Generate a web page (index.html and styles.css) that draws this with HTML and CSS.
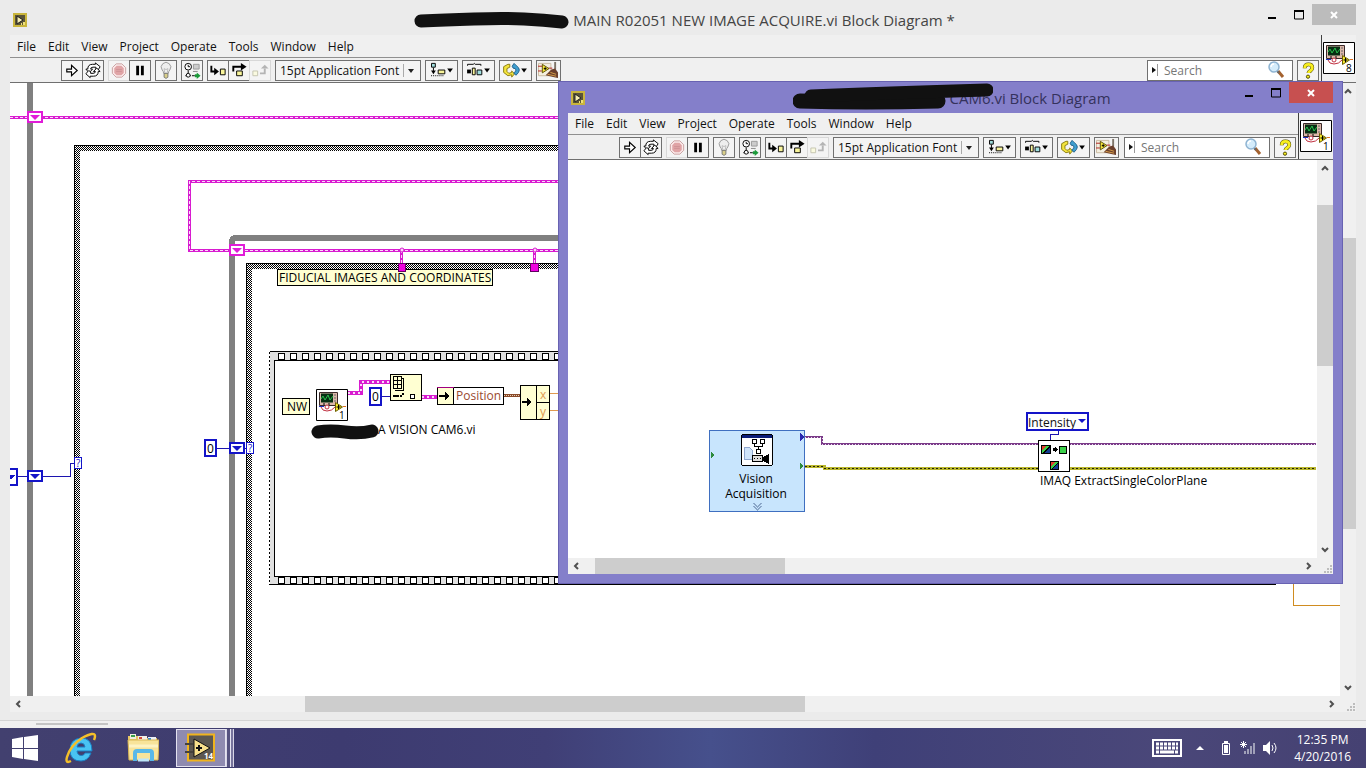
FILE: index.html
```html
<!DOCTYPE html>
<html lang="en">
<head>
    <meta charset="UTF-8">
    <title>Block Diagram</title>
    <link rel="stylesheet" href="styles.css">
</head>
<body>
    <!-- shared icons -->
    <svg class="defs" aria-hidden="true">
        <defs>
            <pattern id="checker" width="2" height="2" patternUnits="userSpaceOnUse">
                <rect width="2" height="2" fill="#fff"/>
                <rect width="1" height="1"/>
                <rect x="1" y="1" width="1" height="1"/>
            </pattern>
            <pattern id="sprocket" x="276" y="0" width="12" height="9" patternUnits="userSpaceOnUse">
                <rect width="12" height="9" fill="#e0e0e0"/>
                <rect x="2" y="1" width="7" height="7"/>
                <rect x="3" y="2" width="5" height="5" fill="#fff"/>
            </pattern>
            <symbol id="i-app" viewBox="0 0 14 14">
                <rect x="1" y="1" width="12" height="12" fill="#5a5438" stroke="#c9b53c" stroke-width="2"/>
                <path d="M4 3v8l6-4z" fill="#f7efb0" stroke="#222"/>
                <path d="M8 10h1v2H8zM10 9h2v3h-2z" fill="#f0e27a"/>
            </symbol>
            <symbol id="i-run" viewBox="0 0 20 20">
                <path d="M4.500 8.500h5v-4l6 5.500-6 5.500v-4h-5z" fill="#fff" stroke="#000" stroke-width="1.200"/>
            </symbol>
            <symbol id="i-cont" viewBox="0 0 20 20">
                <path d="M4.500 8.500q0-5 5-5h3V2l5 4-2.500 4-2-1.500V6.500h-3q-2.500 0-2.500 2h2L6 12.500 2.500 8.500z" fill="#fff" stroke="#000"/>
                <path d="M15.500 11q0 5-5 5H7v1.500l-4.500-4L5.500 10l2 1.500v1.500h2.500q2.500 0 2.500-2h-2L14 7.500l3.500 3.500z" fill="#fff" stroke="#000"/>
            </symbol>
            <symbol id="i-abort" viewBox="0 0 20 20">
                <path d="M7 3h6l4 4v6l-4 4H7l-4-4V7z" fill="#fbeaea" stroke="#c9a0a0"/>
                <path d="M7.500 5h5L15 7.500v5L12.500 15h-5L5 12.500v-5z" fill="#e0a4a6"/>
                <path d="M7 9h6M7 11h6" stroke="#cf9296"/>
            </symbol>
            <symbol id="i-pause" viewBox="0 0 20 20">
                <path d="M6 5h3v10H6zM11 5h3v10h-3z"/>
            </symbol>
            <symbol id="i-bulb" viewBox="0 0 20 20">
                <path d="M7.500 13q0-2-1.500-3.500a5 5 0 1 1 8 0Q12.500 11 12.500 13z" fill="#eee" stroke="#999"/>
                <path d="M8.500 12L8 8l2 1 2-1-.5 4" fill="none" stroke="#bbb"/>
                <path d="M8 13h4v4l-1 1H9l-1-1z" fill="#d9cf88" stroke="#777"/>
            </symbol>
            <symbol id="i-retain" viewBox="0 0 20 20">
                <circle cx="6" cy="6" r="3.500" fill="#fff" stroke="#000"/>
                <path d="M6 4v2h2M6 10v5M3 15.500h6M10 15.500h3" fill="none" stroke="#000"/>
                <circle cx="6" cy="15" r="2" fill="#fff" stroke="#000"/>
                <path d="M11.500 3.500h6v5h-6z" fill="#ccc" stroke="#999"/>
                <path d="M11 11h5" stroke="#888"/>
                <path d="M13 14h2v-2l4 3.500-4 3.500v-2h-2z" fill="#1c9a3a"/>
            </symbol>
            <symbol id="i-into" viewBox="0 0 20 20">
                <path d="M3 5v6h4" fill="none" stroke="#000" stroke-width="2"/>
                <path d="M6 7l5 4-5 4z"/>
                <path d="M12.500 8.500h5v6h-5z" fill="#f8f49a" stroke="#000"/>
            </symbol>
            <symbol id="i-over" viewBox="0 0 20 20">
                <path d="M4 11V6h9" fill="none" stroke="#000" stroke-width="2"/>
                <path d="M12 2l6 4-6 4z"/>
                <path d="M7.500 10.500h6v5h-6z" fill="#f8f49a" stroke="#000"/>
            </symbol>
            <symbol id="i-out" viewBox="0 0 20 20">
                <path d="M2.500 10.500h5v5h-5z" fill="#fafae0" stroke="#c5c5b0"/>
                <path d="M10 13h5V8" fill="none" stroke="#b4b4b4" stroke-width="2"/>
                <path d="M11 8l4-4 4 4z" fill="#b4b4b4"/>
            </symbol>
            <symbol id="i-align" viewBox="0 0 32 20">
                <path d="M5.500 2.500h4v4h-4z" fill="#9fdede" stroke="#000"/>
                <path d="M7.500 7v4" stroke="#000"/>
                <path d="M5 15.500h14" stroke="#000" stroke-dasharray="1 1"/>
                <path d="M5 10h5l-2.500 4z"/>
                <path d="M12.500 9.500h7v4h-7z" fill="#f8f49a" stroke="#000"/>
                <path d="M22 8h6l-3 4z"/>
            </symbol>
            <symbol id="i-dist" viewBox="0 0 32 20">
                <path d="M4.500 5V3.500h6l1-1 1 1h6V5" fill="none" stroke="#000"/>
                <path d="M4 9h4v4H4z"/>
                <path d="M9.500 7.500h3v7h-3z" fill="#f8f49a" stroke="#000"/>
                <path d="M14.500 9.500h5v5h-5z" fill="#9fdede" stroke="#000"/>
                <path d="M22 8h6l-3 4z"/>
            </symbol>
            <symbol id="i-reorder" viewBox="0 0 32 20">
                <path d="M8 3.500L3.500 6v6L8 15.500l4-1V17l3-3.500-3-3v1.500l-3 1-2-2V8l3-1.500v-3z" fill="#f3e43c" stroke="#8a7b10"/>
                <path d="M12.500 5.500L14.500 2.500 17 5q3 2 3 4.500T16.500 15L14 12.500q2.500-1 2.500-3T13.500 7.500z" fill="#3f9fd0" stroke="#1d5f8a"/>
                <path d="M22 8h6l-3 4z"/>
            </symbol>
            <symbol id="i-clean" viewBox="0 0 24 20">
                <path d="M1.500 2.500h13v13h-13z" fill="#f4efe0" stroke="#c9b9a0"/>
                <path d="M1 5.500h5M1 10.500h4M12 7.500h4" stroke="#b02020"/>
                <path d="M5.500 3.500v9l7-4.500z" fill="#f6e53a" stroke="#5b5208"/>
                <path d="M7 8h3M8.500 6.500v3" stroke="#000"/>
                <path d="M18 1h2v8h-2z" fill="#7d7468"/>
                <path d="M15 9l4-1 3 4v6l-4-1-9-2z" fill="#6b3f2c"/>
                <path d="M11 14l9 2M14 12l6 2" stroke="#d8a04a"/>
            </symbol>
            <symbol id="i-lens" viewBox="0 0 18 18">
                <path d="M11 10l5 6" stroke="#a4622f" stroke-width="3"/>
                <path d="M10 10l2 2" stroke="#666" stroke-width="2"/>
                <circle cx="7" cy="6" r="5" fill="#d4ecfb" stroke="#8fb4d2" stroke-width="1.500"/>
                <path d="M4 6q0-3 3-3" fill="none" stroke="#fff" stroke-width="1.500"/>
            </symbol>
            <symbol id="i-help" viewBox="0 0 20 20">
                <path d="M6.500 7.500q0-4 4-4t4 3.500q0 2-2 3.300t-2 2.200" fill="none" stroke="#4a4300" stroke-width="4"/>
                <path d="M6.500 7.500q0-4 4-4t4 3.500q0 2-2 3.300t-2 2.200" fill="none" stroke="#f7ee1e" stroke-width="3"/>
                <circle cx="10" cy="16.500" r="1.700" fill="#f7ee1e" stroke="#4a4300"/>
            </symbol>
            <symbol id="i-vi" viewBox="0 0 32 32">
                <path d="M.5.5h31v31H.5z" fill="#fff" stroke="#000"/>
                <path d="M3.500 3.500h18v13h-18z" fill="#dcb8aa" stroke="#3a2a2a"/>
                <path d="M5 4.500h12v9H5z" fill="#062e12"/>
                <path d="M5 10l2-3 2 4 3-5 2 5 3-4" fill="none" stroke="#28c04c"/>
                <path d="M18 6h2M18 9h2M18 12h2" stroke="#666"/>
                <path d="M7 15h2M12 15h2" stroke="#000"/>
                <path d="M5 18q1 4 6 4t8-4" fill="none" stroke="#c03040"/>
                <circle cx="11" cy="18" r="2" fill="#fff" stroke="#c03040"/>
                <path d="M3 17.500h5" stroke="#2030c0"/>
                <path d="M19.500 13.500v9l7-4.500z" fill="#f7ea2c" stroke="#6b5e00"/>
                <path d="M20.500 18h4M22.500 16v4" stroke="#000"/>
                <path d="M27 17.500h3" stroke="#e07020"/>
            </symbol>
            <symbol id="i-shift" viewBox="0 0 16 12">
                <path d="M1 1h14v10H1z" fill="#fff" stroke="currentColor" stroke-width="2"/>
                <path d="M3 4h10l-5 5z" fill="currentColor"/>
            </symbol>
            <symbol id="i-chev" viewBox="0 0 10 10">
                <path d="M2 7l3-3 3 3" fill="none" stroke="#505050" stroke-width="2"/>
            </symbol>
            <symbol id="i-grip" viewBox="0 0 10 10">
                <path d="M7 1h2v2H7zM4 4h2v2H4zM7 4h2v2H7zM1 7h2v2H1zM4 7h2v2H4zM7 7h2v2H7z" fill="#bdbdbd"/>
            </symbol>
        </defs>
    </svg>

    <main class="desktop">
        <section class="window main">
            <header class="title-bar">
                <div class="title-side"><svg class="app-icon"><use href="#i-app"/></svg></div>
                <h1 class="title">
                    <svg class="redact" viewBox="0 0 156 18"><path class="marker" d="M7 10Q30 9 60 8T110 8 148 11" stroke-width="13"/></svg>
                    MAIN R02051 NEW IMAGE ACQUIRE.vi Block Diagram *
                </h1>
                <div class="win-btns">
                    <button class="win-btn" aria-label="Minimize"><svg viewBox="0 0 12 12"><path d="M2 8h8v2H2z"/></svg></button>
                    <button class="win-btn" aria-label="Maximize"><svg viewBox="0 0 12 12"><path d="M1.500 2v8h9V2z" fill="none" stroke="#000"/><path d="M1 1h10v2H1z"/></svg></button>
                    <button class="win-btn close" aria-label="Close"><svg viewBox="0 0 12 12"><path d="M3 3l6 6M9 3l-6 6" stroke="#fff" stroke-width="2"/></svg></button>
                </div>
            </header>
            <div class="bars">
                <div class="bars-left">
                    <nav class="menu">
                        <button>File</button><button>Edit</button><button>View</button><button>Project</button><button>Operate</button><button>Tools</button><button>Window</button><button>Help</button>
                    </nav>
                    <div class="toolbar">
                        <div class="group">
                            <button class="tool" aria-label="Run"><svg><use href="#i-run"/></svg></button>
                            <button class="tool" aria-label="Run Continuously"><svg><use href="#i-cont"/></svg></button>
                        </div>
                        <div class="group">
                            <button class="tool off" aria-label="Abort"><svg><use href="#i-abort"/></svg></button>
                            <button class="tool" aria-label="Pause"><svg><use href="#i-pause"/></svg></button>
                        </div>
                        <button class="tool" aria-label="Highlight Execution"><svg><use href="#i-bulb"/></svg></button>
                        <button class="tool" aria-label="Retain Wire Values"><svg><use href="#i-retain"/></svg></button>
                        <div class="group">
                            <button class="tool" aria-label="Step Into"><svg><use href="#i-into"/></svg></button>
                            <button class="tool" aria-label="Step Over"><svg><use href="#i-over"/></svg></button>
                            <button class="tool off" aria-label="Step Out"><svg><use href="#i-out"/></svg></button>
                        </div>
                        <div class="font-box">
                            <select aria-label="Text Settings"><option>15pt Application Font</option></select>
                        </div>
                        <button class="tool wide" aria-label="Align Objects"><svg><use href="#i-align"/></svg></button>
                        <button class="tool wide" aria-label="Distribute Objects"><svg><use href="#i-dist"/></svg></button>
                        <button class="tool wide" aria-label="Reorder"><svg><use href="#i-reorder"/></svg></button>
                        <button class="tool clean" aria-label="Clean Up Diagram"><svg><use href="#i-clean"/></svg></button>
                        <label class="search">
                            <span class="search-mark"></span>
                            <input type="text" placeholder="Search" aria-label="Search">
                            <svg><use href="#i-lens"/></svg>
                        </label>
                        <button class="tool help" aria-label="Context Help"><svg><use href="#i-help"/></svg></button>
                    </div>
                </div>
                <svg class="vi-icon" viewBox="0 0 32 32"><use href="#i-vi"/><text x="23" y="30" class="vi-num">8</text></svg>
            </div>
            <div class="view">
                <div class="canvas">
                    <svg class="diagram">
                        <!-- scroll offset of the diagram -->
                        <g transform="translate(-10 -83)">
                            <!-- loops -->
                            <path d="M30 83V900M232 900V242q0-4 4-4H1275" fill="none" stroke="#808080" stroke-width="6"/>

                            <!-- case structures -->
                            <path d="M77 900V148H1275M249 900V266H1275" fill="none" stroke="url(#checker)" stroke-width="6"/>
                            <path d="M74.500 900V145.500H1275M246.500 900V263.500H1275" fill="none" stroke="#000"/>

                            <!-- flat sequence -->
                            <rect x="270" y="352" width="1006" height="233" fill="#e0e0e0"/>
                            <g transform="translate(0 352)"><rect x="276" width="1000" height="9" fill="url(#sprocket)"/></g>
                            <g transform="translate(0 576)"><rect x="276" width="1000" height="9" fill="url(#sprocket)"/></g>
                            <rect x="274.500" y="360.500" width="1000" height="216" fill="#fff" stroke="#000"/>
                            <path d="M1276 351.500H269.500M269 584.500H1276" fill="none" stroke="#000"/>
                            <path d="M269.500 352V585" stroke="#000" stroke-dasharray="2 2"/>

                            <!-- cluster wires -->
                            <g class="wire-pink">
                                <path d="M10 117.500H1275M1275 181.500H189.500V250.500H1275M401.500 250V266M534.500 250V266"/>
                                <path class="dash" d="M10 117.500H1275M1275 181.500H189.500V250.500H1275M401.500 250V266M534.500 250V266"/>
                            </g>
                            <circle class="joint" cx="402" cy="250" r="2"/>
                            <circle class="joint" cx="535" cy="250" r="2"/>
                            <path d="M398.500 263.500h7v8h-7zM530.500 263.500h8v8h-8z" fill="#f000e0" stroke="#600060"/>
                            <use class="pink" href="#i-shift" x="27" y="111" width="16" height="12"/>
                            <use class="pink" href="#i-shift" x="229" y="244" width="16" height="12"/>

                            <!-- integer wires -->
                            <path d="M18 476.500H70.500V463.500H75M217 448.500H246M382 396.500H390" fill="none" stroke="#1c14b0"/>
                            <use class="blue" href="#i-shift" x="27" y="470" width="16" height="12"/>
                            <use class="blue" href="#i-shift" x="229" y="442" width="16" height="12"/>
                            <path d="M10 469h7v16h-7" fill="#fff" stroke="#1414c8" stroke-width="2"/>
                            <path d="M10 475h5l-3 4h-2z" fill="#1414c8"/>
                            <path d="M205 440h11v16h-11zM370 388h11v17h-11z" fill="#fff" stroke="#1414c8" stroke-width="2"/>
                            <text x="207" y="453">0</text>
                            <text x="372" y="401">0</text>
                            <path d="M74.500 457.500h7v11h-7zM246.500 442.500h7v11h-7z" fill="#fff" stroke="#1414c8"/>
                            <text class="small blue" x="76" y="467">?</text>
                            <text class="small blue" x="248" y="452">?</text>

                            <!-- comments -->
                            <rect class="box" x="277.500" y="269.500" width="215" height="16"/>
                            <text x="279" y="282">FIDUCIAL IMAGES AND COORDINATES</text>
                            <rect class="box" x="282.500" y="398.500" width="27" height="16"/>
                            <text x="287" y="411">NW</text>
                            <path d="M398.500 263.500h7v8h-7z" fill="#f000e0" stroke="#600060"/>

                            <!-- sub VI -->
                            <use href="#i-vi" x="316" y="389" width="32" height="32"/>
                            <text class="vi-num" x="339" y="419">1</text>
                            <text x="378" y="434">A VISION CAM6.vi</text>
                            <path class="marker" d="M318 432Q330 430 345 432T372 431" stroke-width="13"/>

                            <!-- index array -->
                            <path d="M348 393H361V382H390M422 397H437" fill="none" stroke="#d81cd0" stroke-width="4"/>
                            <path d="M348 393H361V382H390M422 397H437" fill="none" stroke="#fbd8fa" stroke-width="2" stroke-dasharray="2 3"/>
                            <rect class="box" x="390.500" y="374.500" width="31" height="26"/>
                            <path d="M393.500 376.500h8v12h-8zM393 380.500h9M393 384.500h9M397.500 376v12M402 378.500h1.500V390.500H395" fill="none" stroke="#000"/>
                            <path d="M393 395h6v2h-6zM400 395h2v2h-2zM402 393h2v2h-2z"/>
                            <path d="M410.500 394.500h4v4h-4z" fill="#fff" stroke="#000"/>

                            <!-- unbundle -->
                            <rect class="box" x="437.500" y="387.500" width="66" height="17"/>
                            <rect x="453.500" y="387.500" width="50" height="17" fill="#fff" stroke="#000"/>
                            <path d="M437 387.500H454" stroke="#a00080"/>
                            <path d="M439 395h6v-3l4 4-4 4v-3h-6z"/>
                            <text class="brown" x="456" y="400">Position</text>
                            <path d="M504 395.500H520" stroke="#8a4a2a" stroke-width="3"/>
                            <path d="M504 395.500H520" stroke="#e6d0b8" stroke-dasharray="1 1"/>
                            <rect class="box" x="520.500" y="385.500" width="29" height="34"/>
                            <path d="M536.500 385v34M536 402.500h13" stroke="#000" fill="none"/>
                            <path d="M522 401h5v-3l4 4-4 4v-3h-5z"/>
                            <text class="orange" x="540" y="399">x</text>
                            <text class="orange" x="540" y="416">y</text>
                            <path d="M550 393.500H600M550 410.500H600" stroke="#e09a50"/>

                            <path d="M1293.500 540V605.500H1340" fill="none" stroke="#d08c20"/>
                        </g>
                    </svg>
                </div>
                <div class="scroll-v">
                    <button aria-label="Scroll up"><svg><use href="#i-chev"/></svg></button>
                    <div class="track"><div class="thumb"></div></div>
                    <button aria-label="Scroll down"><svg class="down"><use href="#i-chev"/></svg></button>
                </div>
                <div class="scroll-h">
                    <button aria-label="Scroll left"><svg class="left"><use href="#i-chev"/></svg></button>
                    <div class="track"><div class="thumb"></div></div>
                    <button aria-label="Scroll right"><svg class="right"><use href="#i-chev"/></svg></button>
                </div>
                <div class="grip"><svg><use href="#i-grip"/></svg></div>
            </div>
        </section>

        <section class="window child">
            <header class="title-bar">
                <div class="title-side"><svg class="app-icon"><use href="#i-app"/></svg></div>
                <h2 class="title">
                    CAM6.vi Block Diagram
                    <svg class="redact over" viewBox="0 0 200 28"><path class="marker" d="M7 18Q70 20 145 18" stroke-width="15"/><path class="marker" d="M18 13Q90 10 194 7" stroke-width="13"/></svg>
                </h2>
                <div class="win-btns">
                    <button class="win-btn" aria-label="Minimize"><svg viewBox="0 0 12 12"><path d="M2 8h8v2H2z"/></svg></button>
                    <button class="win-btn" aria-label="Maximize"><svg viewBox="0 0 12 12"><path d="M1.500 2v8h9V2z" fill="none" stroke="#000"/><path d="M1 1h10v2H1z"/></svg></button>
                    <button class="win-btn close" aria-label="Close"><svg viewBox="0 0 12 12"><path d="M3 3l6 6M9 3l-6 6" stroke="#fff" stroke-width="2"/></svg></button>
                </div>
            </header>
            <div class="bars">
                <div class="bars-left">
                    <nav class="menu">
                        <button>File</button><button>Edit</button><button>View</button><button>Project</button><button>Operate</button><button>Tools</button><button>Window</button><button>Help</button>
                    </nav>
                    <div class="toolbar">
                        <div class="group">
                            <button class="tool" aria-label="Run"><svg><use href="#i-run"/></svg></button>
                            <button class="tool" aria-label="Run Continuously"><svg><use href="#i-cont"/></svg></button>
                        </div>
                        <div class="group">
                            <button class="tool off" aria-label="Abort"><svg><use href="#i-abort"/></svg></button>
                            <button class="tool" aria-label="Pause"><svg><use href="#i-pause"/></svg></button>
                        </div>
                        <button class="tool" aria-label="Highlight Execution"><svg><use href="#i-bulb"/></svg></button>
                        <button class="tool" aria-label="Retain Wire Values"><svg><use href="#i-retain"/></svg></button>
                        <div class="group">
                            <button class="tool" aria-label="Step Into"><svg><use href="#i-into"/></svg></button>
                            <button class="tool" aria-label="Step Over"><svg><use href="#i-over"/></svg></button>
                            <button class="tool off" aria-label="Step Out"><svg><use href="#i-out"/></svg></button>
                        </div>
                        <div class="font-box">
                            <select aria-label="Text Settings"><option>15pt Application Font</option></select>
                        </div>
                        <button class="tool wide" aria-label="Align Objects"><svg><use href="#i-align"/></svg></button>
                        <button class="tool wide" aria-label="Distribute Objects"><svg><use href="#i-dist"/></svg></button>
                        <button class="tool wide" aria-label="Reorder"><svg><use href="#i-reorder"/></svg></button>
                        <button class="tool clean" aria-label="Clean Up Diagram"><svg><use href="#i-clean"/></svg></button>
                        <label class="search">
                            <span class="search-mark"></span>
                            <input type="text" placeholder="Search" aria-label="Search">
                            <svg><use href="#i-lens"/></svg>
                        </label>
                        <button class="tool help" aria-label="Context Help"><svg><use href="#i-help"/></svg></button>
                    </div>
                </div>
                <svg class="vi-icon" viewBox="0 0 32 32"><use href="#i-vi"/><text x="23" y="30" class="vi-num">1</text></svg>
            </div>
            <div class="view">
                <div class="canvas">
                    <svg class="diagram">
                        <g transform="translate(-568 -160)">
                            <!-- session and image wires -->
                            <path d="M805 437H822V444H1316" fill="none" stroke="#7a3a88" stroke-width="2"/>
                            <path d="M805 437.500H822.500V444.500H1316" fill="none" stroke="#eadcf0" stroke-dasharray="1 2"/>
                            <path d="M805 466.500H824V468H1316" fill="none" stroke="#b9b62c" stroke-width="3"/>
                            <path d="M805 466.500H824V468H1316" fill="none" stroke="#23230a" stroke-dasharray="2 2"/>

                            <!-- express VI -->
                            <rect x="709.500" y="430.500" width="95" height="81" fill="#c8e5fd" stroke="#3f6fc0"/>
                            <path d="M711 452l4 3-4 3zM800 463l4 3-4 3z" fill="#2d8a3c"/>
                            <path d="M800 433l4 4-4 4z" fill="#2a2ab0"/>
                            <rect x="741.500" y="434.500" width="31" height="31" rx="2" fill="#fff" stroke="#000"/>
                            <path d="M742 435h30v3h-30z" fill="#0a1c78"/>
                            <path d="M752.500 439.500h4v4h-4zM760.500 439.500h4v4h-4zM756.500 449.500h4v4h-4zM754.500 444v2.500H762.500V444M758.500 446.500V449" fill="#fff" stroke="#000"/>
                            <path d="M744.500 447.500h5l3 3v9h-8z" fill="#cfe4fa" stroke="#90a8d0"/>
                            <path d="M752.500 455.500h10v6h-10z" fill="#ddd" stroke="#000" stroke-width="1.500"/>
                            <path d="M762 458l3-2 4-2v10l-4-2-3-2z"/>
                            <path d="M754 458h1M757 458h1M760 458h1" stroke="#000"/>
                            <text x="756" y="483" text-anchor="middle">Vision</text>
                            <text x="756" y="498" text-anchor="middle">Acquisition</text>
                            <path d="M753.500 503l4 4 4-4M753.500 506l4 4 4-4" fill="none" stroke="#8aa6c8"/>

                            <!-- IMAQ ExtractSingleColorPlane -->
                            <path d="M1058.500 430V434.500H1050.500V441" fill="none" stroke="#1c14b0"/>
                            <rect x="1038.500" y="440.500" width="31" height="31" fill="#fff" stroke="#000"/>
                            <path d="M1041 445h10v9h-10zM1050 461h9v9h-9z"/>
                            <path d="M1042 446h4l-4 4zM1051 462h4l-4 4z" fill="#e04030"/>
                            <path d="M1042 453l7-7h-3l-4 4zM1051 469l7-7h-3l-4 4z" fill="#3cd04a"/>
                            <path d="M1044 453l6-6v6zM1053 469l5-6v6z" fill="#103c90"/>
                            <path d="M1053 448h2v-2l3 3.500-3 3.500v-2h-2z"/>
                            <path d="M1059.500 446.500h7v7h-7z" fill="#3cd04a" stroke="#000"/>
                            <text x="1040" y="485">IMAQ ExtractSingleColorPlane</text>
                        </g>
                    </svg>
                    <div class="ring"><select aria-label="Color Plane"><option>Intensity</option></select></div>
                </div>
                <div class="scroll-v">
                    <button aria-label="Scroll up"><svg><use href="#i-chev"/></svg></button>
                    <div class="track"><div class="thumb"></div></div>
                    <button aria-label="Scroll down"><svg class="down"><use href="#i-chev"/></svg></button>
                </div>
                <div class="scroll-h">
                    <button aria-label="Scroll left"><svg class="left"><use href="#i-chev"/></svg></button>
                    <div class="track"><div class="thumb"></div></div>
                    <button aria-label="Scroll right"><svg class="right"><use href="#i-chev"/></svg></button>
                </div>
                <div class="grip"><svg><use href="#i-grip"/></svg></div>
            </div>
        </section>
    </main>

    <footer class="taskbar">
        <button class="task start" aria-label="Start"><svg viewBox="0 0 26 26"><path d="M0 4l11-2v11H0zM12 2l14-2v13H12zM0 14h11v10L0 22zM12 14h14v12l-14-2z" fill="#fff"/></svg></button>
        <button class="task" aria-label="Internet Explorer"><svg viewBox="0 0 32 32">
            <path d="M26 21q-3 8-10 8Q5 29 5 18T16 6q11 0 11 13H12q.5 4.500 4.500 4.500 2.500 0 3.500-2.500zM12 15h8q-.5-4-4-4t-4 4z" fill="#49c3f3" stroke="#1b7fc4"/>
            <path d="M6 29Q0 32 2 25 5 14 17 6 30-1 30 4q0 2-1 4" fill="none" stroke="#f4bf2a" stroke-width="2.500"/>
        </svg></button>
        <button class="task" aria-label="File Explorer"><svg viewBox="0 0 32 32">
            <path d="M1 4h10l2 2h17v6H1z" fill="#e8c763"/>
            <path d="M3 2h6v5H3z" fill="#f2efe0"/><path d="M4 3h4v2H4z" fill="#3aa04a"/>
            <path d="M11 4h9v5h-9z" fill="#f4f1e6"/><path d="M12 5h3v2h-3z" fill="#d24a3a"/>
            <path d="M21 5h8v4h-8z" fill="#eef3f8"/><path d="M21 6h3v2h-3z" fill="#3a8fd0"/>
            <path d="M1 8h31l-1 20H2z" fill="#f8e49a" stroke="#d9b755"/>
            <path d="M2 14h29" stroke="#fdf3c4" stroke-width="3"/>
            <path d="M8 29V21q0-2 2-2h13q2 0 2 2v8" fill="none" stroke="#58b8e8" stroke-width="4"/>
            <path d="M11 28h11" stroke="#bfe6f8" stroke-width="3"/>
        </svg></button>
        <button class="task active" aria-label="LabVIEW"><svg viewBox="0 0 32 32">
            <path d="M3 2.500h26v26H3z" fill="#5c5750" stroke="#f0b41e" stroke-width="2"/>
            <path d="M0 12h8M0 20h8" stroke="#44413c" stroke-width="2"/>
            <path d="M9 7v18l16-9z" fill="#f8e08c" stroke="#111"/>
            <path d="M11 16h6M14 13v6" stroke="#111" stroke-width="2"/>
            <text x="19" y="27" class="task-num">14</text>
        </svg></button>
        <div class="stack"></div>
        <div class="tray">
            <button aria-label="Touch keyboard"><svg class="keyboard" viewBox="0 0 30 18"><path d="M1 1h28v16H1z" fill="none" stroke="#fff" stroke-width="2"/><path d="M4 5h22M4 9h22" stroke="#fff" stroke-width="3" stroke-dasharray="3 1"/><path d="M4 13h3M8 13h14M23 13h3" stroke="#fff" stroke-width="3"/></svg></button>
            <button class="more" aria-label="Show hidden icons"><svg viewBox="0 0 8 8"><path d="M0 6l4-4 4 4z" fill="#fff"/></svg></button>
            <button aria-label="Battery"><svg viewBox="0 0 16 16"><path d="M6 1h4v2H6z" fill="#fff"/><path d="M4.500 3.500h7v11h-7z" fill="none" stroke="#fff"/><path d="M6 5h4v8H6z" fill="#fff"/></svg></button>
            <button aria-label="Network"><svg viewBox="0 0 16 16"><path d="M5 14v-3M8 14V9M11 14V6M14 14V3" stroke="#a0a0b8" stroke-width="2"/><path d="M3.500 1v7M0 4.500h7M1 2l5 5M6 2L1 7" stroke="#fff"/></svg></button>
            <button aria-label="Volume"><svg viewBox="0 0 16 16"><path d="M1 5h3l4-4v14l-4-4H1z" fill="#fff"/><path d="M10 5q2 3 0 6M12 3q4 5 0 10" fill="none" stroke="#fff"/></svg></button>
            <div class="clock"><span>12:35 PM</span><span>4/20/2016</span></div>
        </div>
    </footer>
</body>
</html>
```
FILE: styles.css
```css
* {
    box-sizing: border-box;
}
body {
    margin: 0;
    height: 100vh;
    display: flex;
    flex-direction: column;
    overflow: hidden;
    font-family: "Open Sans", "Noto Sans", sans-serif;
    font-size: 12px;
    color: #111;
}
button, select, input {
    font: inherit;
    color: inherit;
    border: 0;
    padding: 0;
    margin: 0;
    background: none;
}
svg {
    display: block;
}
.defs {
    position: absolute;
    width: 0;
    height: 0;
}

/* windows */
.desktop {
    position: relative;
    flex: 1;
    min-height: 0;
    display: flex;
    background: #f0f0f0;
    padding-bottom: 7px;
}
/* edge of the window behind */
.desktop:after {
    content: "";
    position: absolute;
    left: 36px;
    bottom: 3px;
    width: 72px;
    height: 2px;
    background: #c4c4c4;
}
.window {
    display: flex;
    flex-direction: column;
    padding: 0 10px 8px;
    background: #ebebeb;
}
.window.main {
    flex: 1;
    min-width: 0;
    border-bottom: 1px solid #d4d4d4;
}
.window.child {
    position: absolute;
    top: 81px;
    left: 558px;
    right: 23px;
    bottom: 144px;
    background: #847fca;
    border: 1px solid #6862b2;
    padding: 0 9px 9px;
}

.title-bar {
    display: flex;
    align-items: center;
    height: 35px;
    padding: 4px 0 0 3px;
}
.child .title-bar {
    height: 31px;
    padding-top: 0;
}
.title-side {
    flex: 1;
}
.app-icon {
    width: 14px;
    height: 14px;
}
.title {
    position: relative;
    display: flex;
    align-items: center;
    gap: 3px;
    margin: 0;
    font-size: 15px;
    font-weight: normal;
    color: #444;
    white-space: nowrap;
}
.child .title {
    color: #35325c;
    padding-left: 156px;
}
.redact {
    width: 156px;
    height: 18px;
}
.redact.over {
    position: absolute;
    left: 0;
    top: -5px;
    width: 200px;
    height: 28px;
}
.marker {
    fill: none;
    stroke: #111;
    stroke-linecap: round;
    shape-rendering: auto;
}
.win-btns {
    flex: 1;
    display: flex;
    justify-content: flex-end;
    align-self: flex-start;
}
.win-btn {
    width: 27px;
    height: 21px;
    display: flex;
    align-items: center;
    justify-content: center;
}
.win-btn svg {
    width: 12px;
    height: 12px;
}
.win-btn.close {
    width: 44px;
    background: #bcbcbc;
}
.child .win-btn.close {
    background: #c75050;
}

/* menu and toolbar */
.bars {
    display: flex;
    height: 48px;
    background: #f0f0f0;
    border-bottom: 1px solid #707070;
}
.child .bars {
    height: 47px;
}
.bars-left {
    flex: 1;
    min-width: 0;
    display: flex;
    flex-direction: column;
    border-right: 1px solid #404040;
}
.menu {
    flex: 1;
    display: flex;
    align-items: center;
    padding-left: 1px;
}
.menu button {
    padding: 0 6px;
}
.toolbar {
    display: flex;
    align-items: center;
    gap: 4px;
    height: 25px;
    padding: 0 2px 0 51px;
    border-top: 1px solid #909090;
}
.group {
    display: flex;
}
.group .tool + .tool {
    margin-left: -1px;
}
.tool {
    width: 22px;
    height: 21px;
    flex: none;
    border: 1px solid #707070;
    background: #f4f4f4;
}
.tool.off {
    border-color: #d8d8d8;
}
.tool svg {
    width: 20px;
    height: 19px;
}
.tool.wide {
    width: 33px;
}
.tool.wide svg {
    width: 31px;
}
.tool.clean {
    width: 25px;
}
.tool.clean svg {
    width: 23px;
}
.font-box {
    position: relative;
    width: 146px;
    flex: none;
}
.font-box select {
    display: block;
    appearance: none;
    width: 100%;
    height: 21px;
    padding: 0 4px;
    border: 1px solid #707070;
    background: #f4f4f4;
}
.font-box:after {
    content: "";
    position: absolute;
    right: 7px;
    top: 9px;
    border: 3px solid transparent;
    border-top: 4px solid #222;
    border-bottom: 0;
}
.font-box:before {
    content: "";
    position: absolute;
    right: 17px;
    top: 4px;
    height: 13px;
    border-left: 1px solid #aaa;
}
.search {
    display: flex;
    align-items: center;
    width: 146px;
    height: 21px;
    margin-left: auto;
    padding: 0 7px 0 4px;
    border: 1px solid #707070;
    background: #fff;
}
.search-mark {
    width: 6px;
    height: 12px;
    border-right: 1px solid #999;
}
.search-mark:before {
    content: "";
    display: block;
    margin-top: 3px;
    border: 3px solid transparent;
    border-left: 4px solid #111;
    border-right: 0;
    width: 0;
}
.search input {
    flex: 1;
    min-width: 0;
    padding-left: 6px;
    outline: none;
}
.search input::placeholder {
    color: #777;
    opacity: 1;
}
.search svg {
    width: 18px;
    height: 18px;
}
.vi-icon {
    width: 32px;
    height: 32px;
    margin: 7px 1px 0;
}
.vi-num {
    font-size: 10px;
}

/* diagram area */
.view {
    flex: 1;
    min-height: 0;
    display: grid;
    grid-template-columns: 1fr 16px;
    grid-template-rows: 1fr 16px;
    background: #f0f0f0;
}
.canvas {
    position: relative;
    overflow: hidden;
    background: #fff;
}
.diagram {
    width: 100%;
    height: 100%;
    shape-rendering: crispEdges;
}
.diagram use {
    shape-rendering: auto;
}
.wire-pink path {
    fill: none;
    stroke: #d81cd0;
    stroke-width: 3;
}
.wire-pink .dash {
    stroke: #fbd8fa;
    stroke-width: 1;
    stroke-dasharray: 3 2;
}
.joint {
    fill: #fbd8fa;
    stroke: #d81cd0;
    shape-rendering: auto;
}
.pink {
    color: #e01cd8;
}
.blue {
    color: #1414c8;
}
text.blue {
    fill: #1414c8;
}
text.small {
    font-size: 10px;
}
text.brown {
    fill: #9a4a30;
}
text.orange {
    fill: #e09a50;
}
.box {
    fill: #ffffd2;
    stroke: #000;
}
.ring {
    position: absolute;
    left: 458px;
    top: 252px;
    width: 63px;
    height: 19px;
}
.ring select {
    display: block;
    appearance: none;
    width: 100%;
    height: 100%;
    border: 2px solid #1414c8;
    background: #fff;
}
.ring:after {
    content: "";
    position: absolute;
    right: 3px;
    top: 7px;
    border: 4px solid transparent;
    border-top-color: #1414c8;
    border-bottom: 0;
}

/* scroll bars */
.scroll-v, .scroll-h {
    display: flex;
}
.scroll-v {
    flex-direction: column;
}
.scroll-v button, .scroll-h button {
    width: 16px;
    height: 16px;
    display: flex;
    align-items: center;
    justify-content: center;
}
.scroll-v svg, .scroll-h svg, .grip svg {
    width: 10px;
    height: 10px;
}
.down {
    transform: rotate(180deg);
}
.left {
    transform: rotate(-90deg);
}
.right {
    transform: rotate(90deg);
}
.track {
    position: relative;
    flex: 1;
}
.thumb {
    position: absolute;
    background: #cdcdcd;
}
.scroll-v .thumb {
    left: 0;
    right: 0;
}
.scroll-h .thumb {
    top: 0;
    bottom: 0;
}
.main .scroll-v .thumb {
    top: 24%;
    height: 50%;
}
.main .scroll-h .thumb {
    left: 21.5%;
    width: 38.5%;
}
.child .scroll-v .thumb {
    top: 8%;
    height: 44%;
}
.child .scroll-h .thumb {
    left: 1.5%;
    width: 26.5%;
}
.grip {
    display: flex;
    align-items: flex-end;
    justify-content: flex-end;
}

/* taskbar */
.taskbar {
    display: flex;
    height: 40px;
    background: linear-gradient(90deg, #42406f, #3d3b70 25%, #403f76 40%, #46508c 52%, #3f4078 64%, #4a4779 85%, #454172);
    color: #fff;
}
.task {
    width: 62px;
    display: flex;
    align-items: center;
    justify-content: center;
}
.task svg {
    width: 32px;
    height: 32px;
}
.task.start {
    width: 50px;
}
.task.start svg {
    width: 26px;
    height: 26px;
}
.task.active {
    width: 50px;
    margin: 1px 0 1px 2px;
    background: #8f8bb0;
    border: 1px solid #e4e2f0;
}
.task-num {
    font-size: 8px;
    font-weight: bold;
    fill: #fff;
}
.stack {
    width: 8px;
    margin: 1px 0;
    border: 1px solid #d8d6e6;
    border-width: 0 1px;
    background: linear-gradient(90deg, #55527f 3px, #e4e2f0 3px, #e4e2f0 4px, #77749c 4px);
}
.tray {
    display: flex;
    align-items: center;
    gap: 6px;
    margin-left: auto;
    padding-right: 15px;
}
.tray svg {
    width: 16px;
    height: 16px;
}
.tray .keyboard {
    width: 30px;
    height: 18px;
}
.tray .more {
    padding: 0 8px;
}
.tray .more svg {
    width: 8px;
    height: 8px;
}
.clock {
    display: flex;
    flex-direction: column;
    align-items: center;
    margin-left: 10px;
    line-height: 17px;
}
```
